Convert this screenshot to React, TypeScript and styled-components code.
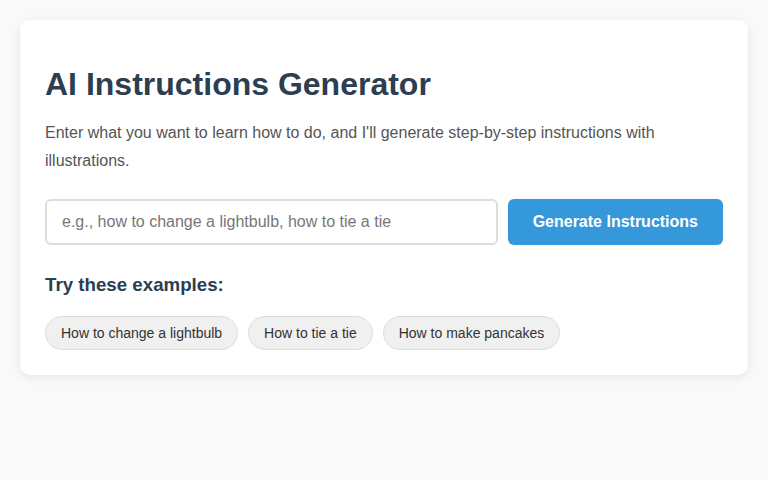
import React, { useState } from 'react';
import styled, { createGlobalStyle } from 'styled-components';

const GlobalStyle = createGlobalStyle`
  body {
    margin: 0;
    padding: 20px;
    background: #f9f9f9;
    font-family: 'Liberation Sans', Arial, sans-serif;
    color: #333;
  }
`;

const examples = [
  'How to change a lightbulb',
  'How to tie a tie',
  'How to make pancakes',
];

const App: React.FC = () => {
  const [query, setQuery] = useState('');

  return (
    <>
      <GlobalStyle />
      <Card>
        <Title>AI Instructions Generator</Title>
        <Intro>
          Enter what you want to learn how to do, and I'll generate step-by-step
          instructions with illustrations.
        </Intro>
        <InputRow>
          <QueryInput
            type='text'
            value={query}
            placeholder='e.g., how to change a lightbulb, how to tie a tie'
            onChange={(e) => setQuery(e.target.value)}
          />
          <GenerateButton type='button'>Generate Instructions</GenerateButton>
        </InputRow>
        <ExamplesTitle>Try these examples:</ExamplesTitle>
        <ChipRow>
          {examples.map((ex) => (
            <Chip key={ex} type='button' onClick={() => setQuery(ex)}>
              {ex}
            </Chip>
          ))}
        </ChipRow>
      </Card>
    </>
  );
};

export default App;

const Card = styled.div`
  background: #fff;
  border-radius: 10px;
  box-shadow: 0 2px 10px rgba(0, 0, 0, 0.08);
  padding: 25px;
`;

const Title = styled.h1`
  margin: 21px 0 16px;
  font-size: 32px;
  font-weight: 700;
  color: #2c3e50;
`;

const Intro = styled.p`
  margin: 0 0 24px;
  font-size: 16px;
  line-height: 28px;
  color: #555;
`;

const InputRow = styled.div`
  display: flex;
  gap: 10px;
  margin-bottom: 29px;
`;

const QueryInput = styled.input`
  flex: 1;
  height: 46px;
  box-sizing: border-box;
  padding: 0 15px;
  border: 2px solid #ddd;
  border-radius: 6px;
  font-family: inherit;
  font-size: 16px;
  color: #333;
  outline: none;

  &::placeholder {
    color: #777;
  }
`;

const GenerateButton = styled.button`
  height: 46px;
  padding: 0 25px;
  border: none;
  border-radius: 6px;
  background: #3498db;
  color: #fff;
  font-family: inherit;
  font-size: 16px;
  font-weight: 700;
  cursor: pointer;
`;

const ExamplesTitle = styled.h3`
  margin: 0 0 20px;
  font-size: 18.72px;
  font-weight: 700;
  color: #2c3e50;
`;

const ChipRow = styled.div`
  display: flex;
  flex-wrap: wrap;
  gap: 10px;
`;

const Chip = styled.button`
  padding: 8px 15px;
  background: #f0f0f0;
  border: 1px solid #ddd;
  border-radius: 20px;
  font-family: inherit;
  font-size: 14px;
  line-height: 16px;
  color: #333;
  cursor: pointer;
`;
